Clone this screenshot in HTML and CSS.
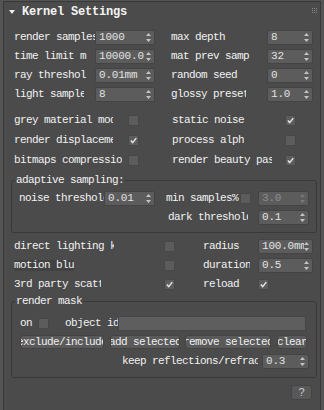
FILE: index.html
```
<!DOCTYPE html>
<html>
<head>
<meta charset="utf-8">
<link rel="stylesheet" href="styles.css">
</head>
<body>
<div class="rollout">
  <div class="head">
    <span class="tri"></span>
    <span class="title">Kernel Settings</span>
    <svg class="grip" width="5" height="5" viewBox="0 0 5 5"><path fill="#8a8a8a" d="M0 0h1v1H0zM2 0h1v1H2zM4 0h1v1H4zM0 2h1v1H0zM2 2h1v1H2zM4 2h1v1H4zM0 4h1v1H0zM2 4h1v1H2zM4 4h1v1H4z"/></svg>
  </div>

  <div class="spins">
    <span class="lbl">render samples</span>
    <div class="spin"><span class="val">1000</span><svg class="arr" viewBox="0 0 5 9"><path d="M2.5 0L5 3H0zM0 6h5L2.5 9z"/></svg></div>
    <span class="lbl rl">max depth</span>
    <div class="spin"><span class="val">8</span><svg class="arr" viewBox="0 0 5 9"><path d="M2.5 0L5 3H0zM0 6h5L2.5 9z"/></svg></div>

    <span class="lbl">time limit m</span>
    <div class="spin"><span class="val">10000.0</span><svg class="arr" viewBox="0 0 5 9"><path d="M2.5 0L5 3H0zM0 6h5L2.5 9z"/></svg></div>
    <span class="lbl rl">mat prev samp</span>
    <div class="spin"><span class="val">32</span><svg class="arr" viewBox="0 0 5 9"><path d="M2.5 0L5 3H0zM0 6h5L2.5 9z"/></svg></div>

    <span class="lbl">ray threshol</span>
    <div class="spin"><span class="val">0.01mm</span><svg class="arr" viewBox="0 0 5 9"><path d="M2.5 0L5 3H0zM0 6h5L2.5 9z"/></svg></div>
    <span class="lbl rl">random seed</span>
    <div class="spin"><span class="val">0</span><svg class="arr" viewBox="0 0 5 9"><path d="M2.5 0L5 3H0zM0 6h5L2.5 9z"/></svg></div>

    <span class="lbl"><span class="clip c-ls">light samples</span></span>
    <div class="spin"><span class="val">8</span><svg class="arr" viewBox="0 0 5 9"><path d="M2.5 0L5 3H0zM0 6h5L2.5 9z"/></svg></div>
    <span class="lbl rl"><span class="clip c-gp">glossy preset</span></span>
    <div class="spin"><span class="val">1.0</span><svg class="arr" viewBox="0 0 5 9"><path d="M2.5 0L5 3H0zM0 6h5L2.5 9z"/></svg></div>
  </div>

  <div class="checks">
    <span class="lbl">grey material mode</span>
    <span class="cb"></span>
    <span class="lbl">static noise</span>
    <span class="cb"><svg viewBox="0 0 11 11"><path d="M2.3 5.6l2.2 2.6 4.4-5.6"/></svg></span>

    <span class="lbl">render displacement</span>
    <span class="cb"><svg viewBox="0 0 11 11"><path d="M2.3 5.6l2.2 2.6 4.4-5.6"/></svg></span>
    <span class="lbl"><span class="clip c-pa">process alpha</span></span>
    <span class="cb"></span>

    <span class="lbl wide">bitmaps compression</span>
    <span class="cb"></span>
    <span class="lbl">render beauty pass</span>
    <span class="cb"><svg viewBox="0 0 11 11"><path d="M2.3 5.6l2.2 2.6 4.4-5.6"/></svg></span>
  </div>

  <div class="group adaptive">
    <span class="gtitle">adaptive sampling:</span>
    <div class="agrid">
      <span class="lbl">noise threshold</span>
      <div class="spin"><span class="val">0.01</span><svg class="arr" viewBox="0 0 5 9"><path d="M2.5 0L5 3H0zM0 6h5L2.5 9z"/></svg></div>
      <span class="lbl">min samples%</span>
      <span class="cb"></span>
      <div class="spin dis"><span class="val">3.0</span><svg class="arr" viewBox="0 0 5 9"><path d="M2.5 0L5 3H0zM0 6h5L2.5 9z"/></svg></div>

      <span class="lbl dark">dark threshold</span>
      <div class="spin"><span class="val">0.1</span><svg class="arr" viewBox="0 0 5 9"><path d="M2.5 0L5 3H0zM0 6h5L2.5 9z"/></svg></div>
    </div>
  </div>

  <div class="misc">
    <span class="lbl w-dl">direct lighting k</span>
    <span class="cb"></span>
    <span class="lbl rlbl">radius</span>
    <div class="spin"><span class="val">100.0mm</span><svg class="arr" viewBox="0 0 5 9"><path d="M2.5 0L5 3H0zM0 6h5L2.5 9z"/></svg></div>

    <span class="lbl w-mb">motion blur</span>
    <span class="cb"></span>
    <span class="lbl rlbl">duration</span>
    <div class="spin"><span class="val">0.5</span><svg class="arr" viewBox="0 0 5 9"><path d="M2.5 0L5 3H0zM0 6h5L2.5 9z"/></svg></div>

    <span class="lbl w-sc">3rd party scatter</span>
    <span class="cb"><svg viewBox="0 0 11 11"><path d="M2.3 5.6l2.2 2.6 4.4-5.6"/></svg></span>
    <span class="lbl rlbl">reload</span>
    <span class="cb"><svg viewBox="0 0 11 11"><path d="M2.3 5.6l2.2 2.6 4.4-5.6"/></svg></span>
  </div>

  <div class="group mask">
    <span class="gtitle">render mask</span>
    <div class="mrow">
      <span class="lbl">on</span>
      <span class="cb"></span>
      <span class="lbl obj">object id</span>
      <span class="field"></span>
    </div>
    <div class="brow">
      <span class="btn b1"><span>exclude/include</span></span>
      <span class="btn b2"><span>add selected</span></span>
      <span class="btn b3"><span>remove selected</span></span>
      <span class="btn b4"><span>clear</span></span>
    </div>
    <div class="krow">
      <span class="lbl">keep reflections/refractions</span>
      <div class="spin"><span class="val">0.3</span><svg class="arr" viewBox="0 0 5 9"><path d="M2.5 0L5 3H0zM0 6h5L2.5 9z"/></svg></div>
    </div>
  </div>

  <div class="foot">
    <span class="help">?</span>
  </div>
</div>
</body>
</html>
```
FILE: styles.css
```
html, body {
  margin: 0;
  padding: 0;
}
body {
  width: 324px;
  height: 410px;
  overflow: hidden;
  background: #545454;
  font-family: "Liberation Mono", "DejaVu Sans Mono", monospace;
  color: #f2f2f2;
}
.rollout {
  box-sizing: border-box;
  margin: 1px 3px 0 3px;
  height: 409px;
  background: #4b4b4b;
  border: 1px solid #383838;
  border-bottom: none;
}
.head {
  height: 20px;
  display: flex;
  align-items: center;
}
.tri {
  width: 0;
  height: 0;
  margin-left: 5px;
  border-left: 3px solid transparent;
  border-right: 3px solid transparent;
  border-top: 4px solid #eeeeee;
}
.title {
  margin-left: 7px;
  font-weight: bold;
  font-size: 12px;
  letter-spacing: -0.2px;
  color: #f4f4f4;
}
.grip {
  margin-left: auto;
  margin-right: 3px;
  margin-top: -4px;
}

.lbl {
  display: block;
  font-size: 11px;
  letter-spacing: -0.6px;
  line-height: 15px;
  height: 15px;
  white-space: nowrap;
  overflow: hidden;
  color: #f2f2f2;
}
.clip {
  display: block;
  overflow: hidden;
  white-space: nowrap;
}
.c-ls { width: 70px; }
.c-gp { width: 75px; }
.c-pa { width: 72px; }

.spin {
  box-sizing: border-box;
  height: 15px;
  background: #5c5c5c;
  border: 1px solid #444444;
  border-radius: 2px;
  display: flex;
  align-items: center;
  padding: 0 3px 0 3px;
  overflow: hidden;
}
.val {
  flex: 1;
  font-size: 11px;
  letter-spacing: -0.2px;
  line-height: 13px;
  color: #e2e2e2;
  white-space: nowrap;
  overflow: hidden;
}
.arr {
  width: 5px;
  height: 9px;
  flex: none;
  fill: #c4c4c4;
}
.spin.dis .val { color: #8c8c8c; }
.spin.dis .arr { fill: #7a7a7a; }

.cb {
  box-sizing: border-box;
  width: 11px;
  height: 11px;
  background: #5c5c5c;
  border: 1px solid #474747;
  align-self: center;
  display: block;
}
.cb svg {
  display: block;
  width: 9px;
  height: 9px;
  fill: none;
  stroke: #e6e6e6;
  stroke-width: 1.8;
}

.spins {
  margin-top: 8px;
  padding-left: 10px;
  display: grid;
  grid-template-columns: 81px 60px 112px 46px;
  grid-auto-rows: 15px;
  row-gap: 4px;
}
.spins .rl {
  padding-left: 16px;
}

.checks {
  margin-top: 8px;
  padding-left: 10px;
  display: grid;
  grid-template-columns: 99px 15px 11px 33px 100px 13px 11px;
  grid-auto-rows: 20px;
  align-items: center;
}
.checks .lbl:nth-child(4n+1) { grid-column: 1; }
.checks .wide { grid-column: 1 / span 2; width: 108px; }
.checks .cb:nth-child(4n+2) { grid-column: 3; }
.checks .lbl:nth-child(4n+3) { grid-column: 5; }
.checks .cb:nth-child(4n+4) { grid-column: 7; }

.group {
  position: relative;
  margin-left: 7px;
  margin-right: 3px;
  border: 1px solid #393939;
  border-radius: 3px;
}
.gtitle {
  position: absolute;
  left: 3px;
  top: -8px;
  padding: 0 1px;
  background: #4b4b4b;
  font-size: 11px;
  letter-spacing: -0.6px;
  line-height: 15px;
  white-space: nowrap;
  color: #f2f2f2;
}
.adaptive {
  margin-top: 10px;
  padding: 10px 0 7px 7px;
}
.agrid {
  display: grid;
  grid-template-columns: 85px 51px 11px 74px 11px 7px 51px;
  grid-auto-rows: 15px;
  row-gap: 4px;
}
.agrid > :nth-child(1) { grid-column: 1; }
.agrid > :nth-child(2) { grid-column: 2; }
.agrid > :nth-child(3) { grid-column: 4; }
.agrid > :nth-child(4) { grid-column: 5; }
.agrid > :nth-child(5) { grid-column: 7; }
.agrid .dark { grid-column: 4 / span 3; padding-left: 2px; width: 80px; }
.agrid > :nth-child(7) { grid-column: 7; }

.misc {
  margin-top: 6px;
  padding-left: 10px;
  display: grid;
  grid-template-columns: 150px 11px 83px 55px;
  grid-auto-rows: 15px;
  row-gap: 4px;
  align-items: center;
}
.misc .rlbl { margin-left: 28px; width: 47px; }
.w-dl { width: 100px; }
.w-mb { width: 60px; background: #424242; height: 11px; line-height: 11px; }
.w-sc { width: 87px; }

.mask {
  margin-top: 9px;
  padding: 14px 8px 8px 8px;
}
.mrow {
  display: grid;
  grid-template-columns: 18px 11px 16px 53px 188px;
  grid-template-rows: 15px;
  align-items: center;
}
.mrow .obj { grid-column: 4; }
.field {
  box-sizing: border-box;
  height: 15px;
  background: #5e5e5e;
  border: 1px solid #464646;
  display: block;
}
.brow {
  margin-top: 4px;
  display: grid;
  grid-template-columns: 84px 70px 85px 30px;
  column-gap: 6px;
  height: 14px;
}
.btn {
  box-sizing: border-box;
  height: 14px;
  background: #5a5a5a;
  border: 1px solid #444444;
  border-radius: 3px;
  display: flex;
  justify-content: center;
  align-items: center;
  overflow: hidden;
  white-space: nowrap;
  font-size: 11px;
  letter-spacing: -0.6px;
  color: #f0f0f0;
}
.btn span { flex: none; }
.btn.b3 { margin-left: -1px; }
.krow {
  margin-top: 5px;
  padding-left: 102px;
  display: grid;
  grid-template-columns: 136px 4px 47px;
  grid-template-rows: 15px;
}
.krow .spin { grid-column: 3; }

.foot {
  margin-top: 7px;
  display: flex;
  justify-content: flex-end;
  padding-right: 8px;
}
.help {
  box-sizing: border-box;
  width: 21px;
  height: 15px;
  background: #585858;
  border: 1px solid #444444;
  border-radius: 3px;
  font-family: "Liberation Sans", sans-serif;
  font-size: 11px;
  line-height: 13px;
  text-align: center;
  color: #cccccc;
}
```
